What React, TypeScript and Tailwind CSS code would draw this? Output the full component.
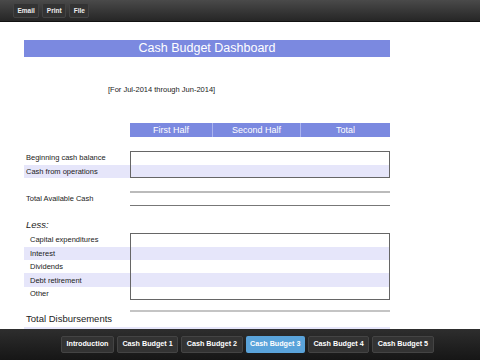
import React from 'react';

const font = { fontFamily: '"Liberation Sans", Arial, sans-serif' };

function BoxRow({ label, shaded, first, last, indent }: { label: string; shaded?: boolean; first?: boolean; last?: boolean; indent?: boolean }) {
  return (
    <div className={`flex h-[13.4px] items-center ${shaded ? 'bg-[#e6e6fa]' : ''}`}>
      <div className={`w-[106px] text-[7.5px] text-[#222] ${indent ? 'pl-[6px]' : 'pl-[2px]'}`}>{label}</div>
      <div
        className={`flex-1 h-full border-l border-r border-[#666] ${first ? 'border-t' : ''} ${last ? 'border-b' : ''}`}
      />
    </div>
  );
}

export default function App() {
  const tabs = ['Introduction', 'Cash Budget 1', 'Cash Budget 2', 'Cash Budget 3', 'Cash Budget 4', 'Cash Budget 5'];
  return (
    <div className="relative w-[480px] h-[360px] overflow-hidden bg-white" style={font}>
      <div className="h-[22px] bg-gradient-to-b from-[#4a4a4a] to-[#262626] flex items-center pl-[13px] gap-[3px] border-b border-[#111]">
        {['Email', 'Print', 'File'].map((b) => (
          <div key={b} className="h-[15px] px-[3.5px] flex items-center rounded-[2px] bg-[#333] border border-[#444] text-[6.5px] font-bold text-[#eee]">
            {b}
          </div>
        ))}
      </div>

      <div className="ml-[24px] w-[366px]">
        <div className="mt-[18px] h-[17px] bg-[#7b89e0] flex items-center justify-center text-[12.5px] text-white">
          Cash Budget Dashboard
        </div>
        <div className="mt-[27px] ml-[84px] text-[7.5px] text-[#222]">[For Jul-2014 through Jun-2014]</div>

        <div className="mt-[28px] ml-[106px] h-[14px] flex bg-[#7b89e0] text-[9px] text-white">
          <div className="w-[82px] flex items-center justify-center">First Half</div>
          <div className="w-[88px] flex items-center justify-center border-l border-[#aab3ee]">Second Half</div>
          <div className="flex-1 flex items-center justify-center border-l border-[#aab3ee]">Total</div>
        </div>

        <div className="mt-[14px]">
          <BoxRow label="Beginning cash balance" first />
          <BoxRow label="Cash from operations" shaded last />
        </div>

        <div className="mt-[13px] flex h-[15px] items-center">
          <div className="w-[106px] pl-[2px] text-[7.5px] text-[#222]">Total Available Cash</div>
          <div className="flex-1 h-full border-t-2 border-t-[#bbb] border-b border-b-[#777]" />
        </div>

        <div className="mt-[12px] pl-[2px] text-[9.5px] italic text-[#222]">Less:</div>

        <div className="mt-[1px]">
          <BoxRow label="Capital expenditures" first indent />
          <BoxRow label="Interest" shaded indent />
          <BoxRow label="Dividends" indent />
          <BoxRow label="Debt retirement" shaded indent />
          <BoxRow label="Other" last indent />
        </div>

        <div className="mt-[10px] ml-[106px] border-t-2 border-[#c4c4c4]" />
        <div className="pl-[2px] text-[9.5px] text-[#222]">Total Disbursements</div>
        <div className="mt-[1px] h-[12px] bg-[#e6e6fa]" />
      </div>

      <div className="absolute bottom-0 left-0 w-[480px] h-[31px] bg-gradient-to-b from-[#2e2e2e] to-[#161616] flex items-center pl-[61px] gap-[3px]">
        {tabs.map((t) => (
          <div
            key={t}
            className={`h-[17px] px-[4.5px] flex items-center rounded-[2px] text-[7.2px] font-bold text-white ${
              t === 'Cash Budget 3' ? 'bg-[#5aa3da]' : 'bg-[#333] border border-[#444]'
            }`}
          >
            {t}
          </div>
        ))}
      </div>
    </div>
  );
}
